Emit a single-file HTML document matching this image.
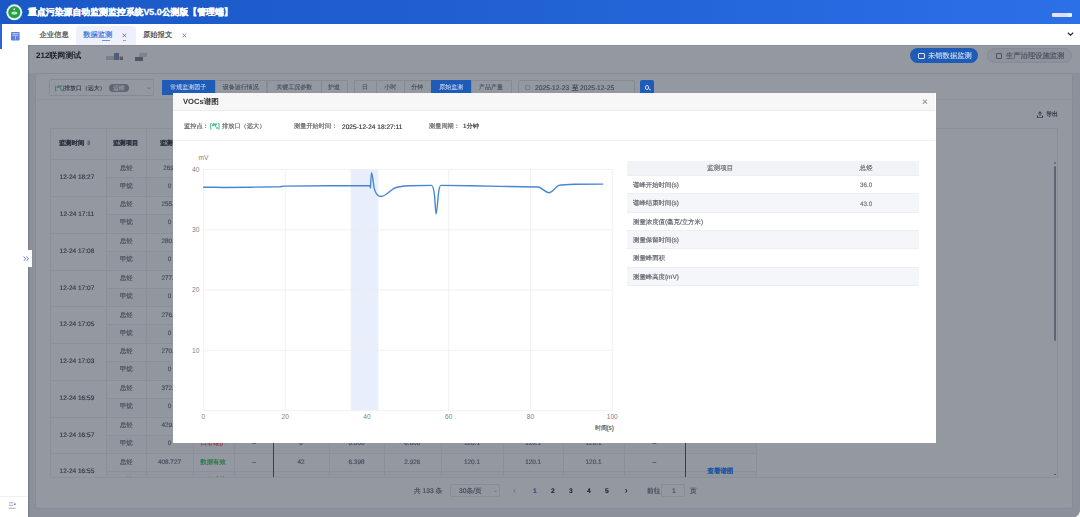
<!DOCTYPE html>
<html><head><meta charset="utf-8">
<style>
*{box-sizing:border-box;margin:0;padding:0}
html,body{width:1080px;height:517px;overflow:hidden;background:#fff}
body{position:relative;font-family:"Liberation Sans",sans-serif;color:#606266}
.abs{position:absolute}
.t{position:absolute;white-space:nowrap;line-height:1;text-rendering:geometricPrecision;-webkit-text-stroke:0.35px currentColor}
#hdr{left:0;top:0;width:1080px;height:23.5px;background:linear-gradient(90deg,#1a58c6 0%,#1f5fd0 40%,#2668de 75%,#2c70e8 100%);}
#hdr .logo{left:6px;top:4.8px;width:16px;height:16px;border-radius:50%;background:#fff}
#hdr .logo i{position:absolute;left:2px;top:2px;width:12px;height:12px;border-radius:50%;background:#1f9a3c}
#hdr .logo b{position:absolute;left:4.5px;top:4.5px;width:7px;height:7px;border-radius:50%;background:#fff}
#hdr .logo s{position:absolute;left:5.5px;top:5.5px;width:5px;height:5px;border-radius:50%;background:#2aa84a}
#hdr .title{text-rendering:geometricPrecision;left:28px;top:6.2px;font-size:8.9px;font-weight:bold;color:#fff;white-space:nowrap;line-height:13px;-webkit-text-stroke:0.3px #fff}
#side{left:0;top:23.5px;width:28px;height:494px;background:#fff}
#tabs{left:28px;top:23.5px;width:1052px;height:21px;background:#fff}
.tab{position:absolute;top:0;text-rendering:geometricPrecision;height:21px;line-height:22.2px;font-size:7.3px;color:#303133;white-space:nowrap;-webkit-text-stroke:0.2px currentColor}
#page{left:28px;top:44.5px;width:1052px;height:472.5px;background:#f0f2f5;overflow:hidden}
#over{left:28px;top:44.5px;width:1052px;height:472.5px;overflow:hidden}
#mask{left:28px;top:44.5px;width:1052px;height:472.5px;background:rgba(0,10,30,0.42)}
#modal{left:173px;top:93.2px;width:762.8px;height:349.5px;background:#fff;overflow:hidden}
</style></head><body>
<div id="root" style="position:absolute;left:0;top:0;width:1080px;height:517px;overflow:hidden">
<div id="hdr" class="abs">
  <svg class="abs" style="left:6px;top:4px" width="17" height="17" viewBox="0 0 17 17"><circle cx="8.3" cy="8.3" r="8" fill="#d9eedc"/><circle cx="8.3" cy="8.3" r="6.9" fill="none" stroke="#ffffff" stroke-width="0.9" stroke-dasharray="1 0.6"/><circle cx="8.3" cy="8.3" r="6" fill="#22a046"/><ellipse cx="8.3" cy="9" rx="3" ry="1.6" fill="#bfe6c6"/><circle cx="8.3" cy="5.2" r="0.9" fill="#e8f6ea"/></svg>
  <div class="title abs">重点污染源自动监测监控系统V5.0公测版【管理端】</div>
  <div class="abs" style="left:1052px;top:12.5px;width:20px;height:4.5px;background:linear-gradient(90deg,#dfe6f8,#f2d9e6,#cfe2f8,#e9f6ff);border-radius:1px"></div>
</div>
<div id="side" class="abs">
  <div class="abs" style="left:0;top:0;width:1.5px;height:25px;background:#2a64d6"></div>
  <svg class="abs" style="left:10.5px;top:8.8px" width="9" height="9" viewBox="0 0 9 9"><rect x="0" y="0" width="8.6" height="8.6" rx="1" fill="#5a80e0"/><rect x="1.3" y="1.4" width="6" height="0.9" fill="#dfe8fb"/><rect x="1.3" y="3.4" width="6" height="0.7" fill="#c9d6f6"/><rect x="4" y="4.1" width="0.7" height="3.4" fill="#c9d6f6"/></svg>
  <div class="abs" style="left:0;top:472px;width:28px;height:1px;background:#eef0f3"></div>
  <svg class="abs" style="left:7.5px;top:477.5px" width="9" height="9" viewBox="0 0 9 9"><path d="M1,1.8 H5.3 M1,4.3 H5.3 M0.6,7.2 H7.6" stroke="#9aa2b2" stroke-width="0.9"/><circle cx="6.8" cy="3.3" r="1" fill="#7f89a8"/></svg>
</div>
<div id="tabs" class="abs">
  <div class="tab" style="left:11.5px;color:#45484f">企业信息</div>
  <div class="abs" style="left:47.5px;top:2.5px;width:60px;height:18.5px;background:#eef1fb;border-radius:3px 3px 0 0"></div>
  <div class="tab" style="left:55.2px;color:#3a6fd8">数据监测</div>
  <svg class="abs" style="left:93.5px;top:9.5px" width="5" height="5" viewBox="0 0 5 5"><path d="M0.6,0.6 L4.2,4.2 M4.2,0.6 L0.6,4.2" stroke="#5a5f70" stroke-width="0.8"/></svg>
  <div class="abs" style="left:74px;top:16.3px;width:7.5px;height:0.9px;background:#6f8fd8"></div>
  <div class="abs" style="left:94.5px;top:16.5px;width:3.5px;height:0.8px;background:#8fa5d8"></div>
  <div class="tab" style="left:115px;color:#45484f">原始报文</div>
  <svg class="abs" style="left:153.5px;top:9.5px" width="5" height="5" viewBox="0 0 5 5"><path d="M0.6,0.6 L4.2,4.2 M4.2,0.6 L0.6,4.2" stroke="#707480" stroke-width="0.8"/></svg>
  <svg class="abs" style="left:1038.5px;top:8.5px" width="7" height="4" viewBox="0 0 7 4"><path d="M0.8,0.8 L3.5,3.2 L6.2,0.8" fill="none" stroke="#303133" stroke-width="1.3"/></svg>
</div>
<div id="page" class="abs">
<div class="abs" style="left:0.00px;top:0.00px;width:1052.00px;height:28.00px;background:#fff"></div>
<div class="abs" style="left:7.00px;top:28.00px;width:1038.00px;height:436.00px;background:#fff;border:0.8px solid #e6e8ee;border-radius:3px"></div>
<div class="t" style="left:7.50px;top:7.90px;font-size:16.00px;font-weight:bold;color:#303133;-webkit-text-stroke:0;transform:scale(0.5);transform-origin:0 0">212<span style="font-weight:bold">联网测试</span></div>
<div class="abs" style="left:62.20px;top:12.20px;width:3.80px;height:3.80px;background:#fff;filter:blur(0.5px)"></div>
<div class="abs" style="left:70.00px;top:8.30px;width:3.80px;height:7.70px;background:#fff;filter:blur(0.5px)"></div>
<div class="abs" style="left:78.40px;top:11.70px;width:16.20px;height:4.30px;background:#d8d4dc;filter:blur(0.7px)"></div>
<div class="abs" style="left:86.20px;top:8.30px;width:4.50px;height:7.70px;background:#8a9ab8;filter:blur(0.7px)"></div>
<div class="abs" style="left:91.50px;top:12.20px;width:3.10px;height:3.80px;background:#a88890;filter:blur(0.6px)"></div>
<div class="abs" style="left:110.80px;top:8.60px;width:7.80px;height:3.60px;background:#d8dce4;filter:blur(0.6px)"></div>
<div class="abs" style="left:106.90px;top:12.80px;width:7.80px;height:3.60px;background:#8a8e96;filter:blur(0.6px)"></div>
<div class="abs" style="left:958.50px;top:3.80px;width:85.20px;height:14.80px;background:#f4f5f7;border:1px solid #e4e7ed;border-radius:8px"></div>
<div class="abs" style="left:967.50px;top:8.00px;width:6.00px;height:6.00px;border:0.9px solid #84878d;border-radius:1px"></div>
<div class="t" style="left:978.00px;top:7.00px;font-size:14.60px;color:#84878d;transform:scale(0.5);transform-origin:0 0">生产治理设施监测</div>
<div class="abs" style="left:7.00px;top:54.50px;width:1038.50px;height:0.80px;background:#f2f3f6"></div>
<div class="abs" style="left:21.40px;top:34.90px;width:105.00px;height:16.20px;border:0.8px solid #e4e7ed;border-radius:2px;background:#fff"></div>
<div class="t" style="left:26.90px;top:40.00px;font-size:11.80px;color:#6a6d73;transform:scale(0.5);transform-origin:0 0"><span style="color:#4cb893">[气]</span>排放口（远大）</div>
<div class="abs" style="left:81.40px;top:39.40px;width:19.50px;height:7.80px;background:#a3a7af;border-radius:4px"></div>
<div class="t" style="left:84.50px;top:40.50px;font-size:11.60px;color:#ffffff;transform:scale(0.5);transform-origin:0 0">运维</div>
<div class="abs" style="left:124.80px;top:36.00px;width:0.80px;height:14.00px;background:#eceef2"></div>
<div class="t" style="left:118.00px;top:38.50px;font-size:14.00px;color:#c0c4cc;transform:scale(0.5);transform-origin:0 0">⌄</div>
<div class="abs" style="left:187.00px;top:35.30px;width:52.30px;height:15.70px;background:#fff;border:0.8px solid #e6e8ed"></div>
<div class="t" style="left:187.00px;top:39.50px;width:103.00px;text-align:center;font-size:12.00px;color:#7c7f85;-webkit-text-stroke:0.25px currentColor;transform:scale(0.5);transform-origin:0 0">设备运行情况</div>
<div class="abs" style="left:238.50px;top:35.30px;width:55.30px;height:15.70px;background:#fff;border:0.8px solid #e6e8ed"></div>
<div class="t" style="left:238.50px;top:39.50px;width:109.00px;text-align:center;font-size:12.00px;color:#7c7f85;-webkit-text-stroke:0.25px currentColor;transform:scale(0.5);transform-origin:0 0">关键工况参数</div>
<div class="abs" style="left:293.00px;top:35.30px;width:26.80px;height:15.70px;background:#fff;border:0.8px solid #e6e8ed"></div>
<div class="t" style="left:293.00px;top:39.50px;width:52.00px;text-align:center;font-size:12.00px;color:#7c7f85;-webkit-text-stroke:0.25px currentColor;transform:scale(0.5);transform-origin:0 0">护道</div>
<div class="abs" style="left:325.50px;top:35.30px;width:23.00px;height:15.70px;background:#fff;border:0.8px solid #e6e8ed"></div>
<div class="t" style="left:325.50px;top:39.50px;width:44.40px;text-align:center;font-size:12.00px;color:#7c7f85;-webkit-text-stroke:0.25px currentColor;transform:scale(0.5);transform-origin:0 0">日</div>
<div class="abs" style="left:347.70px;top:35.30px;width:29.50px;height:15.70px;background:#fff;border:0.8px solid #e6e8ed"></div>
<div class="t" style="left:347.70px;top:39.50px;width:57.40px;text-align:center;font-size:12.00px;color:#7c7f85;-webkit-text-stroke:0.25px currentColor;transform:scale(0.5);transform-origin:0 0">小时</div>
<div class="abs" style="left:376.40px;top:35.30px;width:27.40px;height:15.70px;background:#fff;border:0.8px solid #e6e8ed"></div>
<div class="t" style="left:376.40px;top:39.50px;width:53.20px;text-align:center;font-size:12.00px;color:#7c7f85;-webkit-text-stroke:0.25px currentColor;transform:scale(0.5);transform-origin:0 0">分钟</div>
<div class="abs" style="left:443.30px;top:35.30px;width:41.00px;height:15.70px;background:#fff;border:0.8px solid #e6e8ed"></div>
<div class="t" style="left:443.30px;top:39.50px;width:80.40px;text-align:center;font-size:12.00px;color:#7c7f85;-webkit-text-stroke:0.25px currentColor;transform:scale(0.5);transform-origin:0 0">产品产量</div>
<div class="abs" style="left:490.00px;top:35.30px;width:116.60px;height:15.70px;border:0.8px solid #e6e8ed;border-radius:2px;background:#fff"></div>
<div class="abs" style="left:496.50px;top:40.00px;width:5.50px;height:5.50px;border:0.8px solid #d0d3d9;border-radius:1px"></div>
<div class="t" style="left:506.80px;top:39.80px;font-size:13.40px;color:#7a7d83;transform:scale(0.5);transform-origin:0 0">2025-12-23</div>
<div class="t" style="left:543.50px;top:39.80px;font-size:13.40px;color:#505358;transform:scale(0.5);transform-origin:0 0">至</div>
<div class="t" style="left:552.00px;top:39.80px;font-size:13.40px;color:#7a7d83;transform:scale(0.5);transform-origin:0 0">2025-12-25</div>
<svg class="abs" style="left:1009.20px;top:66.10px" width="6" height="7.5" viewBox="0 0 6 7.5"><path d="M0.5,4.5 L0.5,6.9 L5.5,6.9 L5.5,4.5 M3,5.2 L3,0.8 M1.3,2.4 L3,0.8 L4.7,2.4" fill="none" stroke="#45484f" stroke-width="0.9"/></svg>
<div class="t" style="left:1017.90px;top:66.80px;font-size:12.00px;color:#45484f;transform:scale(0.5);transform-origin:0 0">导出</div>
<div class="abs" style="left:22.00px;top:83.90px;width:1008.00px;height:349.90px;overflow:hidden"><div class="abs" style="left:0.00px;top:30.90px;width:706.00px;height:0.80px;background:#eff0f4"></div>
<div class="abs" style="left:55.80px;top:48.90px;width:650.20px;height:18.00px;background:#fbfbfc"></div>
<div class="abs" style="left:55.80px;top:85.65px;width:650.20px;height:18.00px;background:#fbfbfc"></div>
<div class="abs" style="left:55.80px;top:122.40px;width:650.20px;height:18.00px;background:#fbfbfc"></div>
<div class="abs" style="left:55.80px;top:159.15px;width:650.20px;height:18.00px;background:#fbfbfc"></div>
<div class="abs" style="left:55.80px;top:195.90px;width:650.20px;height:18.00px;background:#fbfbfc"></div>
<div class="abs" style="left:55.80px;top:232.65px;width:650.20px;height:18.00px;background:#fbfbfc"></div>
<div class="abs" style="left:55.80px;top:269.40px;width:650.20px;height:18.00px;background:#fbfbfc"></div>
<div class="abs" style="left:55.80px;top:306.15px;width:650.20px;height:18.00px;background:#fbfbfc"></div>
<div class="abs" style="left:55.80px;top:342.90px;width:650.20px;height:18.00px;background:#fbfbfc"></div>
<div class="abs" style="left:55.80px;top:0.00px;width:0.80px;height:349.90px;background:#eff0f4"></div>
<div class="abs" style="left:96.40px;top:0.00px;width:0.80px;height:349.90px;background:#eff0f4"></div>
<div class="abs" style="left:143.30px;top:0.00px;width:0.80px;height:349.90px;background:#eff0f4"></div>
<div class="abs" style="left:183.50px;top:0.00px;width:0.80px;height:349.90px;background:#eff0f4"></div>
<div class="abs" style="left:223.30px;top:0.00px;width:0.80px;height:349.90px;background:#eff0f4"></div>
<div class="abs" style="left:279.40px;top:0.00px;width:0.80px;height:349.90px;background:#eff0f4"></div>
<div class="abs" style="left:334.40px;top:0.00px;width:0.80px;height:349.90px;background:#eff0f4"></div>
<div class="abs" style="left:391.00px;top:0.00px;width:0.80px;height:349.90px;background:#eff0f4"></div>
<div class="abs" style="left:453.00px;top:0.00px;width:0.80px;height:349.90px;background:#eff0f4"></div>
<div class="abs" style="left:513.30px;top:0.00px;width:0.80px;height:349.90px;background:#eff0f4"></div>
<div class="abs" style="left:574.40px;top:0.00px;width:0.80px;height:349.90px;background:#eff0f4"></div>
<div class="abs" style="left:635.00px;top:0.00px;width:0.80px;height:349.90px;background:#eff0f4"></div>
<div class="abs" style="left:706.00px;top:0.00px;width:0.80px;height:349.90px;background:#eff0f4"></div>
<div class="t" style="left:8.50px;top:11.40px;font-size:12.70px;color:#4a4d54;font-weight:bold;-webkit-text-stroke:0.15px currentColor;transform:scale(0.5);transform-origin:0 0">监测时间 <span style="font-size:12.00px;color:#a8abb2">⇕</span></div>
<div class="t" style="left:63.00px;top:11.40px;font-size:12.70px;color:#4a4d54;font-weight:bold;-webkit-text-stroke:0.15px currentColor;transform:scale(0.5);transform-origin:0 0">监测项目</div>
<div class="t" style="left:109.50px;top:11.40px;font-size:12.70px;color:#4a4d54;font-weight:bold;-webkit-text-stroke:0.15px currentColor;transform:scale(0.5);transform-origin:0 0">监测值(mg/m³)</div>
<div class="abs" style="left:0.00px;top:67.65px;width:706.00px;height:0.80px;background:#eff0f4"></div>
<div class="abs" style="left:55.80px;top:48.90px;width:650.20px;height:0.80px;background:#eff0f4"></div>
<div class="t" style="left:-1.20px;top:45.00px;width:111.60px;text-align:center;font-size:13.00px;color:#5a5c62;transform:scale(0.5);transform-origin:0 0">12-24 18:27</div>
<div class="t" style="left:55.80px;top:36.30px;width:81.20px;text-align:center;font-size:12.80px;color:#7d8087;transform:scale(0.5);transform-origin:0 0">总烃</div>
<div class="t" style="left:96.40px;top:36.30px;width:93.80px;text-align:center;font-size:12.80px;color:#7d8087;transform:scale(0.5);transform-origin:0 0">269.</div>
<div class="t" style="left:143.30px;top:36.30px;width:80.40px;text-align:center;font-size:12.80px;color:#7d8087;transform:scale(0.5);transform-origin:0 0"><span style="color:#45c060">数据有效</span></div>
<div class="t" style="left:183.50px;top:36.30px;width:79.60px;text-align:center;font-size:12.80px;color:#7d8087;transform:scale(0.5);transform-origin:0 0">--</div>
<div class="t" style="left:223.30px;top:36.30px;width:112.20px;text-align:center;font-size:12.80px;color:#7d8087;transform:scale(0.5);transform-origin:0 0">42</div>
<div class="t" style="left:279.40px;top:36.30px;width:110.00px;text-align:center;font-size:12.80px;color:#7d8087;transform:scale(0.5);transform-origin:0 0">6.398</div>
<div class="t" style="left:334.40px;top:36.30px;width:113.20px;text-align:center;font-size:12.80px;color:#7d8087;transform:scale(0.5);transform-origin:0 0">2.926</div>
<div class="t" style="left:391.00px;top:36.30px;width:124.00px;text-align:center;font-size:12.80px;color:#7d8087;transform:scale(0.5);transform-origin:0 0">120.1</div>
<div class="t" style="left:453.00px;top:36.30px;width:120.60px;text-align:center;font-size:12.80px;color:#7d8087;transform:scale(0.5);transform-origin:0 0">120.1</div>
<div class="t" style="left:513.30px;top:36.30px;width:122.20px;text-align:center;font-size:12.80px;color:#7d8087;transform:scale(0.5);transform-origin:0 0">120.1</div>
<div class="t" style="left:574.40px;top:36.30px;width:121.20px;text-align:center;font-size:12.80px;color:#7d8087;transform:scale(0.5);transform-origin:0 0">--</div>
<div class="t" style="left:55.80px;top:54.30px;width:81.20px;text-align:center;font-size:12.80px;color:#7d8087;transform:scale(0.5);transform-origin:0 0">甲烷</div>
<div class="t" style="left:96.40px;top:54.30px;width:93.80px;text-align:center;font-size:12.80px;color:#7d8087;transform:scale(0.5);transform-origin:0 0">0</div>
<div class="t" style="left:143.30px;top:54.30px;width:80.40px;text-align:center;font-size:12.80px;color:#7d8087;transform:scale(0.5);transform-origin:0 0"><span style="color:#ff5050">日常维护</span></div>
<div class="t" style="left:183.50px;top:54.30px;width:79.60px;text-align:center;font-size:12.80px;color:#7d8087;transform:scale(0.5);transform-origin:0 0">--</div>
<div class="t" style="left:223.30px;top:54.30px;width:112.20px;text-align:center;font-size:12.80px;color:#7d8087;transform:scale(0.5);transform-origin:0 0">0</div>
<div class="t" style="left:279.40px;top:54.30px;width:110.00px;text-align:center;font-size:12.80px;color:#7d8087;transform:scale(0.5);transform-origin:0 0">0.000</div>
<div class="t" style="left:334.40px;top:54.30px;width:113.20px;text-align:center;font-size:12.80px;color:#7d8087;transform:scale(0.5);transform-origin:0 0">0.000</div>
<div class="t" style="left:391.00px;top:54.30px;width:124.00px;text-align:center;font-size:12.80px;color:#7d8087;transform:scale(0.5);transform-origin:0 0">120.1</div>
<div class="t" style="left:453.00px;top:54.30px;width:120.60px;text-align:center;font-size:12.80px;color:#7d8087;transform:scale(0.5);transform-origin:0 0">120.1</div>
<div class="t" style="left:513.30px;top:54.30px;width:122.20px;text-align:center;font-size:12.80px;color:#7d8087;transform:scale(0.5);transform-origin:0 0">120.1</div>
<div class="t" style="left:574.40px;top:54.30px;width:121.20px;text-align:center;font-size:12.80px;color:#7d8087;transform:scale(0.5);transform-origin:0 0">--</div>
<div class="t" style="left:635.00px;top:44.30px;width:142.00px;text-align:center;font-size:13.00px;color:#3a8cff;font-weight:bold;-webkit-text-stroke:0.1px currentColor;transform:scale(0.5);transform-origin:0 0">查看谱图</div>
<div class="abs" style="left:0.00px;top:104.40px;width:706.00px;height:0.80px;background:#eff0f4"></div>
<div class="abs" style="left:55.80px;top:85.65px;width:650.20px;height:0.80px;background:#eff0f4"></div>
<div class="t" style="left:-1.20px;top:81.75px;width:111.60px;text-align:center;font-size:13.00px;color:#5a5c62;transform:scale(0.5);transform-origin:0 0">12-24 17:11</div>
<div class="t" style="left:55.80px;top:73.05px;width:81.20px;text-align:center;font-size:12.80px;color:#7d8087;transform:scale(0.5);transform-origin:0 0">总烃</div>
<div class="t" style="left:96.40px;top:73.05px;width:93.80px;text-align:center;font-size:12.80px;color:#7d8087;transform:scale(0.5);transform-origin:0 0">255.5</div>
<div class="t" style="left:143.30px;top:73.05px;width:80.40px;text-align:center;font-size:12.80px;color:#7d8087;transform:scale(0.5);transform-origin:0 0"><span style="color:#45c060">数据有效</span></div>
<div class="t" style="left:183.50px;top:73.05px;width:79.60px;text-align:center;font-size:12.80px;color:#7d8087;transform:scale(0.5);transform-origin:0 0">--</div>
<div class="t" style="left:223.30px;top:73.05px;width:112.20px;text-align:center;font-size:12.80px;color:#7d8087;transform:scale(0.5);transform-origin:0 0">42</div>
<div class="t" style="left:279.40px;top:73.05px;width:110.00px;text-align:center;font-size:12.80px;color:#7d8087;transform:scale(0.5);transform-origin:0 0">6.398</div>
<div class="t" style="left:334.40px;top:73.05px;width:113.20px;text-align:center;font-size:12.80px;color:#7d8087;transform:scale(0.5);transform-origin:0 0">2.926</div>
<div class="t" style="left:391.00px;top:73.05px;width:124.00px;text-align:center;font-size:12.80px;color:#7d8087;transform:scale(0.5);transform-origin:0 0">120.1</div>
<div class="t" style="left:453.00px;top:73.05px;width:120.60px;text-align:center;font-size:12.80px;color:#7d8087;transform:scale(0.5);transform-origin:0 0">120.1</div>
<div class="t" style="left:513.30px;top:73.05px;width:122.20px;text-align:center;font-size:12.80px;color:#7d8087;transform:scale(0.5);transform-origin:0 0">120.1</div>
<div class="t" style="left:574.40px;top:73.05px;width:121.20px;text-align:center;font-size:12.80px;color:#7d8087;transform:scale(0.5);transform-origin:0 0">--</div>
<div class="t" style="left:55.80px;top:91.05px;width:81.20px;text-align:center;font-size:12.80px;color:#7d8087;transform:scale(0.5);transform-origin:0 0">甲烷</div>
<div class="t" style="left:96.40px;top:91.05px;width:93.80px;text-align:center;font-size:12.80px;color:#7d8087;transform:scale(0.5);transform-origin:0 0">0</div>
<div class="t" style="left:143.30px;top:91.05px;width:80.40px;text-align:center;font-size:12.80px;color:#7d8087;transform:scale(0.5);transform-origin:0 0"><span style="color:#ff5050">日常维护</span></div>
<div class="t" style="left:183.50px;top:91.05px;width:79.60px;text-align:center;font-size:12.80px;color:#7d8087;transform:scale(0.5);transform-origin:0 0">--</div>
<div class="t" style="left:223.30px;top:91.05px;width:112.20px;text-align:center;font-size:12.80px;color:#7d8087;transform:scale(0.5);transform-origin:0 0">0</div>
<div class="t" style="left:279.40px;top:91.05px;width:110.00px;text-align:center;font-size:12.80px;color:#7d8087;transform:scale(0.5);transform-origin:0 0">0.000</div>
<div class="t" style="left:334.40px;top:91.05px;width:113.20px;text-align:center;font-size:12.80px;color:#7d8087;transform:scale(0.5);transform-origin:0 0">0.000</div>
<div class="t" style="left:391.00px;top:91.05px;width:124.00px;text-align:center;font-size:12.80px;color:#7d8087;transform:scale(0.5);transform-origin:0 0">120.1</div>
<div class="t" style="left:453.00px;top:91.05px;width:120.60px;text-align:center;font-size:12.80px;color:#7d8087;transform:scale(0.5);transform-origin:0 0">120.1</div>
<div class="t" style="left:513.30px;top:91.05px;width:122.20px;text-align:center;font-size:12.80px;color:#7d8087;transform:scale(0.5);transform-origin:0 0">120.1</div>
<div class="t" style="left:574.40px;top:91.05px;width:121.20px;text-align:center;font-size:12.80px;color:#7d8087;transform:scale(0.5);transform-origin:0 0">--</div>
<div class="t" style="left:635.00px;top:81.05px;width:142.00px;text-align:center;font-size:13.00px;color:#3a8cff;font-weight:bold;-webkit-text-stroke:0.1px currentColor;transform:scale(0.5);transform-origin:0 0">查看谱图</div>
<div class="abs" style="left:0.00px;top:141.15px;width:706.00px;height:0.80px;background:#eff0f4"></div>
<div class="abs" style="left:55.80px;top:122.40px;width:650.20px;height:0.80px;background:#eff0f4"></div>
<div class="t" style="left:-1.20px;top:118.50px;width:111.60px;text-align:center;font-size:13.00px;color:#5a5c62;transform:scale(0.5);transform-origin:0 0">12-24 17:08</div>
<div class="t" style="left:55.80px;top:109.80px;width:81.20px;text-align:center;font-size:12.80px;color:#7d8087;transform:scale(0.5);transform-origin:0 0">总烃</div>
<div class="t" style="left:96.40px;top:109.80px;width:93.80px;text-align:center;font-size:12.80px;color:#7d8087;transform:scale(0.5);transform-origin:0 0">280.5</div>
<div class="t" style="left:143.30px;top:109.80px;width:80.40px;text-align:center;font-size:12.80px;color:#7d8087;transform:scale(0.5);transform-origin:0 0"><span style="color:#45c060">数据有效</span></div>
<div class="t" style="left:183.50px;top:109.80px;width:79.60px;text-align:center;font-size:12.80px;color:#7d8087;transform:scale(0.5);transform-origin:0 0">--</div>
<div class="t" style="left:223.30px;top:109.80px;width:112.20px;text-align:center;font-size:12.80px;color:#7d8087;transform:scale(0.5);transform-origin:0 0">42</div>
<div class="t" style="left:279.40px;top:109.80px;width:110.00px;text-align:center;font-size:12.80px;color:#7d8087;transform:scale(0.5);transform-origin:0 0">6.398</div>
<div class="t" style="left:334.40px;top:109.80px;width:113.20px;text-align:center;font-size:12.80px;color:#7d8087;transform:scale(0.5);transform-origin:0 0">2.926</div>
<div class="t" style="left:391.00px;top:109.80px;width:124.00px;text-align:center;font-size:12.80px;color:#7d8087;transform:scale(0.5);transform-origin:0 0">120.1</div>
<div class="t" style="left:453.00px;top:109.80px;width:120.60px;text-align:center;font-size:12.80px;color:#7d8087;transform:scale(0.5);transform-origin:0 0">120.1</div>
<div class="t" style="left:513.30px;top:109.80px;width:122.20px;text-align:center;font-size:12.80px;color:#7d8087;transform:scale(0.5);transform-origin:0 0">120.1</div>
<div class="t" style="left:574.40px;top:109.80px;width:121.20px;text-align:center;font-size:12.80px;color:#7d8087;transform:scale(0.5);transform-origin:0 0">--</div>
<div class="t" style="left:55.80px;top:127.80px;width:81.20px;text-align:center;font-size:12.80px;color:#7d8087;transform:scale(0.5);transform-origin:0 0">甲烷</div>
<div class="t" style="left:96.40px;top:127.80px;width:93.80px;text-align:center;font-size:12.80px;color:#7d8087;transform:scale(0.5);transform-origin:0 0">0</div>
<div class="t" style="left:143.30px;top:127.80px;width:80.40px;text-align:center;font-size:12.80px;color:#7d8087;transform:scale(0.5);transform-origin:0 0"><span style="color:#ff5050">日常维护</span></div>
<div class="t" style="left:183.50px;top:127.80px;width:79.60px;text-align:center;font-size:12.80px;color:#7d8087;transform:scale(0.5);transform-origin:0 0">--</div>
<div class="t" style="left:223.30px;top:127.80px;width:112.20px;text-align:center;font-size:12.80px;color:#7d8087;transform:scale(0.5);transform-origin:0 0">0</div>
<div class="t" style="left:279.40px;top:127.80px;width:110.00px;text-align:center;font-size:12.80px;color:#7d8087;transform:scale(0.5);transform-origin:0 0">0.000</div>
<div class="t" style="left:334.40px;top:127.80px;width:113.20px;text-align:center;font-size:12.80px;color:#7d8087;transform:scale(0.5);transform-origin:0 0">0.000</div>
<div class="t" style="left:391.00px;top:127.80px;width:124.00px;text-align:center;font-size:12.80px;color:#7d8087;transform:scale(0.5);transform-origin:0 0">120.1</div>
<div class="t" style="left:453.00px;top:127.80px;width:120.60px;text-align:center;font-size:12.80px;color:#7d8087;transform:scale(0.5);transform-origin:0 0">120.1</div>
<div class="t" style="left:513.30px;top:127.80px;width:122.20px;text-align:center;font-size:12.80px;color:#7d8087;transform:scale(0.5);transform-origin:0 0">120.1</div>
<div class="t" style="left:574.40px;top:127.80px;width:121.20px;text-align:center;font-size:12.80px;color:#7d8087;transform:scale(0.5);transform-origin:0 0">--</div>
<div class="t" style="left:635.00px;top:117.80px;width:142.00px;text-align:center;font-size:13.00px;color:#3a8cff;font-weight:bold;-webkit-text-stroke:0.1px currentColor;transform:scale(0.5);transform-origin:0 0">查看谱图</div>
<div class="abs" style="left:0.00px;top:177.90px;width:706.00px;height:0.80px;background:#eff0f4"></div>
<div class="abs" style="left:55.80px;top:159.15px;width:650.20px;height:0.80px;background:#eff0f4"></div>
<div class="t" style="left:-1.20px;top:155.25px;width:111.60px;text-align:center;font-size:13.00px;color:#5a5c62;transform:scale(0.5);transform-origin:0 0">12-24 17:07</div>
<div class="t" style="left:55.80px;top:146.55px;width:81.20px;text-align:center;font-size:12.80px;color:#7d8087;transform:scale(0.5);transform-origin:0 0">总烃</div>
<div class="t" style="left:96.40px;top:146.55px;width:93.80px;text-align:center;font-size:12.80px;color:#7d8087;transform:scale(0.5);transform-origin:0 0">277.0</div>
<div class="t" style="left:143.30px;top:146.55px;width:80.40px;text-align:center;font-size:12.80px;color:#7d8087;transform:scale(0.5);transform-origin:0 0"><span style="color:#45c060">数据有效</span></div>
<div class="t" style="left:183.50px;top:146.55px;width:79.60px;text-align:center;font-size:12.80px;color:#7d8087;transform:scale(0.5);transform-origin:0 0">--</div>
<div class="t" style="left:223.30px;top:146.55px;width:112.20px;text-align:center;font-size:12.80px;color:#7d8087;transform:scale(0.5);transform-origin:0 0">42</div>
<div class="t" style="left:279.40px;top:146.55px;width:110.00px;text-align:center;font-size:12.80px;color:#7d8087;transform:scale(0.5);transform-origin:0 0">6.398</div>
<div class="t" style="left:334.40px;top:146.55px;width:113.20px;text-align:center;font-size:12.80px;color:#7d8087;transform:scale(0.5);transform-origin:0 0">2.926</div>
<div class="t" style="left:391.00px;top:146.55px;width:124.00px;text-align:center;font-size:12.80px;color:#7d8087;transform:scale(0.5);transform-origin:0 0">120.1</div>
<div class="t" style="left:453.00px;top:146.55px;width:120.60px;text-align:center;font-size:12.80px;color:#7d8087;transform:scale(0.5);transform-origin:0 0">120.1</div>
<div class="t" style="left:513.30px;top:146.55px;width:122.20px;text-align:center;font-size:12.80px;color:#7d8087;transform:scale(0.5);transform-origin:0 0">120.1</div>
<div class="t" style="left:574.40px;top:146.55px;width:121.20px;text-align:center;font-size:12.80px;color:#7d8087;transform:scale(0.5);transform-origin:0 0">--</div>
<div class="t" style="left:55.80px;top:164.55px;width:81.20px;text-align:center;font-size:12.80px;color:#7d8087;transform:scale(0.5);transform-origin:0 0">甲烷</div>
<div class="t" style="left:96.40px;top:164.55px;width:93.80px;text-align:center;font-size:12.80px;color:#7d8087;transform:scale(0.5);transform-origin:0 0">0</div>
<div class="t" style="left:143.30px;top:164.55px;width:80.40px;text-align:center;font-size:12.80px;color:#7d8087;transform:scale(0.5);transform-origin:0 0"><span style="color:#ff5050">日常维护</span></div>
<div class="t" style="left:183.50px;top:164.55px;width:79.60px;text-align:center;font-size:12.80px;color:#7d8087;transform:scale(0.5);transform-origin:0 0">--</div>
<div class="t" style="left:223.30px;top:164.55px;width:112.20px;text-align:center;font-size:12.80px;color:#7d8087;transform:scale(0.5);transform-origin:0 0">0</div>
<div class="t" style="left:279.40px;top:164.55px;width:110.00px;text-align:center;font-size:12.80px;color:#7d8087;transform:scale(0.5);transform-origin:0 0">0.000</div>
<div class="t" style="left:334.40px;top:164.55px;width:113.20px;text-align:center;font-size:12.80px;color:#7d8087;transform:scale(0.5);transform-origin:0 0">0.000</div>
<div class="t" style="left:391.00px;top:164.55px;width:124.00px;text-align:center;font-size:12.80px;color:#7d8087;transform:scale(0.5);transform-origin:0 0">120.1</div>
<div class="t" style="left:453.00px;top:164.55px;width:120.60px;text-align:center;font-size:12.80px;color:#7d8087;transform:scale(0.5);transform-origin:0 0">120.1</div>
<div class="t" style="left:513.30px;top:164.55px;width:122.20px;text-align:center;font-size:12.80px;color:#7d8087;transform:scale(0.5);transform-origin:0 0">120.1</div>
<div class="t" style="left:574.40px;top:164.55px;width:121.20px;text-align:center;font-size:12.80px;color:#7d8087;transform:scale(0.5);transform-origin:0 0">--</div>
<div class="t" style="left:635.00px;top:154.55px;width:142.00px;text-align:center;font-size:13.00px;color:#3a8cff;font-weight:bold;-webkit-text-stroke:0.1px currentColor;transform:scale(0.5);transform-origin:0 0">查看谱图</div>
<div class="abs" style="left:0.00px;top:214.65px;width:706.00px;height:0.80px;background:#eff0f4"></div>
<div class="abs" style="left:55.80px;top:195.90px;width:650.20px;height:0.80px;background:#eff0f4"></div>
<div class="t" style="left:-1.20px;top:192.00px;width:111.60px;text-align:center;font-size:13.00px;color:#5a5c62;transform:scale(0.5);transform-origin:0 0">12-24 17:05</div>
<div class="t" style="left:55.80px;top:183.30px;width:81.20px;text-align:center;font-size:12.80px;color:#7d8087;transform:scale(0.5);transform-origin:0 0">总烃</div>
<div class="t" style="left:96.40px;top:183.30px;width:93.80px;text-align:center;font-size:12.80px;color:#7d8087;transform:scale(0.5);transform-origin:0 0">276.0</div>
<div class="t" style="left:143.30px;top:183.30px;width:80.40px;text-align:center;font-size:12.80px;color:#7d8087;transform:scale(0.5);transform-origin:0 0"><span style="color:#45c060">数据有效</span></div>
<div class="t" style="left:183.50px;top:183.30px;width:79.60px;text-align:center;font-size:12.80px;color:#7d8087;transform:scale(0.5);transform-origin:0 0">--</div>
<div class="t" style="left:223.30px;top:183.30px;width:112.20px;text-align:center;font-size:12.80px;color:#7d8087;transform:scale(0.5);transform-origin:0 0">42</div>
<div class="t" style="left:279.40px;top:183.30px;width:110.00px;text-align:center;font-size:12.80px;color:#7d8087;transform:scale(0.5);transform-origin:0 0">6.398</div>
<div class="t" style="left:334.40px;top:183.30px;width:113.20px;text-align:center;font-size:12.80px;color:#7d8087;transform:scale(0.5);transform-origin:0 0">2.926</div>
<div class="t" style="left:391.00px;top:183.30px;width:124.00px;text-align:center;font-size:12.80px;color:#7d8087;transform:scale(0.5);transform-origin:0 0">120.1</div>
<div class="t" style="left:453.00px;top:183.30px;width:120.60px;text-align:center;font-size:12.80px;color:#7d8087;transform:scale(0.5);transform-origin:0 0">120.1</div>
<div class="t" style="left:513.30px;top:183.30px;width:122.20px;text-align:center;font-size:12.80px;color:#7d8087;transform:scale(0.5);transform-origin:0 0">120.1</div>
<div class="t" style="left:574.40px;top:183.30px;width:121.20px;text-align:center;font-size:12.80px;color:#7d8087;transform:scale(0.5);transform-origin:0 0">--</div>
<div class="t" style="left:55.80px;top:201.30px;width:81.20px;text-align:center;font-size:12.80px;color:#7d8087;transform:scale(0.5);transform-origin:0 0">甲烷</div>
<div class="t" style="left:96.40px;top:201.30px;width:93.80px;text-align:center;font-size:12.80px;color:#7d8087;transform:scale(0.5);transform-origin:0 0">0</div>
<div class="t" style="left:143.30px;top:201.30px;width:80.40px;text-align:center;font-size:12.80px;color:#7d8087;transform:scale(0.5);transform-origin:0 0"><span style="color:#ff5050">日常维护</span></div>
<div class="t" style="left:183.50px;top:201.30px;width:79.60px;text-align:center;font-size:12.80px;color:#7d8087;transform:scale(0.5);transform-origin:0 0">--</div>
<div class="t" style="left:223.30px;top:201.30px;width:112.20px;text-align:center;font-size:12.80px;color:#7d8087;transform:scale(0.5);transform-origin:0 0">0</div>
<div class="t" style="left:279.40px;top:201.30px;width:110.00px;text-align:center;font-size:12.80px;color:#7d8087;transform:scale(0.5);transform-origin:0 0">0.000</div>
<div class="t" style="left:334.40px;top:201.30px;width:113.20px;text-align:center;font-size:12.80px;color:#7d8087;transform:scale(0.5);transform-origin:0 0">0.000</div>
<div class="t" style="left:391.00px;top:201.30px;width:124.00px;text-align:center;font-size:12.80px;color:#7d8087;transform:scale(0.5);transform-origin:0 0">120.1</div>
<div class="t" style="left:453.00px;top:201.30px;width:120.60px;text-align:center;font-size:12.80px;color:#7d8087;transform:scale(0.5);transform-origin:0 0">120.1</div>
<div class="t" style="left:513.30px;top:201.30px;width:122.20px;text-align:center;font-size:12.80px;color:#7d8087;transform:scale(0.5);transform-origin:0 0">120.1</div>
<div class="t" style="left:574.40px;top:201.30px;width:121.20px;text-align:center;font-size:12.80px;color:#7d8087;transform:scale(0.5);transform-origin:0 0">--</div>
<div class="t" style="left:635.00px;top:191.30px;width:142.00px;text-align:center;font-size:13.00px;color:#3a8cff;font-weight:bold;-webkit-text-stroke:0.1px currentColor;transform:scale(0.5);transform-origin:0 0">查看谱图</div>
<div class="abs" style="left:0.00px;top:251.40px;width:706.00px;height:0.80px;background:#eff0f4"></div>
<div class="abs" style="left:55.80px;top:232.65px;width:650.20px;height:0.80px;background:#eff0f4"></div>
<div class="t" style="left:-1.20px;top:228.75px;width:111.60px;text-align:center;font-size:13.00px;color:#5a5c62;transform:scale(0.5);transform-origin:0 0">12-24 17:03</div>
<div class="t" style="left:55.80px;top:220.05px;width:81.20px;text-align:center;font-size:12.80px;color:#7d8087;transform:scale(0.5);transform-origin:0 0">总烃</div>
<div class="t" style="left:96.40px;top:220.05px;width:93.80px;text-align:center;font-size:12.80px;color:#7d8087;transform:scale(0.5);transform-origin:0 0">270.0</div>
<div class="t" style="left:143.30px;top:220.05px;width:80.40px;text-align:center;font-size:12.80px;color:#7d8087;transform:scale(0.5);transform-origin:0 0"><span style="color:#45c060">数据有效</span></div>
<div class="t" style="left:183.50px;top:220.05px;width:79.60px;text-align:center;font-size:12.80px;color:#7d8087;transform:scale(0.5);transform-origin:0 0">--</div>
<div class="t" style="left:223.30px;top:220.05px;width:112.20px;text-align:center;font-size:12.80px;color:#7d8087;transform:scale(0.5);transform-origin:0 0">42</div>
<div class="t" style="left:279.40px;top:220.05px;width:110.00px;text-align:center;font-size:12.80px;color:#7d8087;transform:scale(0.5);transform-origin:0 0">6.398</div>
<div class="t" style="left:334.40px;top:220.05px;width:113.20px;text-align:center;font-size:12.80px;color:#7d8087;transform:scale(0.5);transform-origin:0 0">2.926</div>
<div class="t" style="left:391.00px;top:220.05px;width:124.00px;text-align:center;font-size:12.80px;color:#7d8087;transform:scale(0.5);transform-origin:0 0">120.1</div>
<div class="t" style="left:453.00px;top:220.05px;width:120.60px;text-align:center;font-size:12.80px;color:#7d8087;transform:scale(0.5);transform-origin:0 0">120.1</div>
<div class="t" style="left:513.30px;top:220.05px;width:122.20px;text-align:center;font-size:12.80px;color:#7d8087;transform:scale(0.5);transform-origin:0 0">120.1</div>
<div class="t" style="left:574.40px;top:220.05px;width:121.20px;text-align:center;font-size:12.80px;color:#7d8087;transform:scale(0.5);transform-origin:0 0">--</div>
<div class="t" style="left:55.80px;top:238.05px;width:81.20px;text-align:center;font-size:12.80px;color:#7d8087;transform:scale(0.5);transform-origin:0 0">甲烷</div>
<div class="t" style="left:96.40px;top:238.05px;width:93.80px;text-align:center;font-size:12.80px;color:#7d8087;transform:scale(0.5);transform-origin:0 0">0</div>
<div class="t" style="left:143.30px;top:238.05px;width:80.40px;text-align:center;font-size:12.80px;color:#7d8087;transform:scale(0.5);transform-origin:0 0"><span style="color:#ff5050">日常维护</span></div>
<div class="t" style="left:183.50px;top:238.05px;width:79.60px;text-align:center;font-size:12.80px;color:#7d8087;transform:scale(0.5);transform-origin:0 0">--</div>
<div class="t" style="left:223.30px;top:238.05px;width:112.20px;text-align:center;font-size:12.80px;color:#7d8087;transform:scale(0.5);transform-origin:0 0">0</div>
<div class="t" style="left:279.40px;top:238.05px;width:110.00px;text-align:center;font-size:12.80px;color:#7d8087;transform:scale(0.5);transform-origin:0 0">0.000</div>
<div class="t" style="left:334.40px;top:238.05px;width:113.20px;text-align:center;font-size:12.80px;color:#7d8087;transform:scale(0.5);transform-origin:0 0">0.000</div>
<div class="t" style="left:391.00px;top:238.05px;width:124.00px;text-align:center;font-size:12.80px;color:#7d8087;transform:scale(0.5);transform-origin:0 0">120.1</div>
<div class="t" style="left:453.00px;top:238.05px;width:120.60px;text-align:center;font-size:12.80px;color:#7d8087;transform:scale(0.5);transform-origin:0 0">120.1</div>
<div class="t" style="left:513.30px;top:238.05px;width:122.20px;text-align:center;font-size:12.80px;color:#7d8087;transform:scale(0.5);transform-origin:0 0">120.1</div>
<div class="t" style="left:574.40px;top:238.05px;width:121.20px;text-align:center;font-size:12.80px;color:#7d8087;transform:scale(0.5);transform-origin:0 0">--</div>
<div class="t" style="left:635.00px;top:228.05px;width:142.00px;text-align:center;font-size:13.00px;color:#3a8cff;font-weight:bold;-webkit-text-stroke:0.1px currentColor;transform:scale(0.5);transform-origin:0 0">查看谱图</div>
<div class="abs" style="left:0.00px;top:288.15px;width:706.00px;height:0.80px;background:#eff0f4"></div>
<div class="abs" style="left:55.80px;top:269.40px;width:650.20px;height:0.80px;background:#eff0f4"></div>
<div class="t" style="left:-1.20px;top:265.50px;width:111.60px;text-align:center;font-size:13.00px;color:#5a5c62;transform:scale(0.5);transform-origin:0 0">12-24 16:59</div>
<div class="t" style="left:55.80px;top:256.80px;width:81.20px;text-align:center;font-size:12.80px;color:#7d8087;transform:scale(0.5);transform-origin:0 0">总烃</div>
<div class="t" style="left:96.40px;top:256.80px;width:93.80px;text-align:center;font-size:12.80px;color:#7d8087;transform:scale(0.5);transform-origin:0 0">372.7</div>
<div class="t" style="left:143.30px;top:256.80px;width:80.40px;text-align:center;font-size:12.80px;color:#7d8087;transform:scale(0.5);transform-origin:0 0"><span style="color:#45c060">数据有效</span></div>
<div class="t" style="left:183.50px;top:256.80px;width:79.60px;text-align:center;font-size:12.80px;color:#7d8087;transform:scale(0.5);transform-origin:0 0">--</div>
<div class="t" style="left:223.30px;top:256.80px;width:112.20px;text-align:center;font-size:12.80px;color:#7d8087;transform:scale(0.5);transform-origin:0 0">42</div>
<div class="t" style="left:279.40px;top:256.80px;width:110.00px;text-align:center;font-size:12.80px;color:#7d8087;transform:scale(0.5);transform-origin:0 0">6.398</div>
<div class="t" style="left:334.40px;top:256.80px;width:113.20px;text-align:center;font-size:12.80px;color:#7d8087;transform:scale(0.5);transform-origin:0 0">2.926</div>
<div class="t" style="left:391.00px;top:256.80px;width:124.00px;text-align:center;font-size:12.80px;color:#7d8087;transform:scale(0.5);transform-origin:0 0">120.1</div>
<div class="t" style="left:453.00px;top:256.80px;width:120.60px;text-align:center;font-size:12.80px;color:#7d8087;transform:scale(0.5);transform-origin:0 0">120.1</div>
<div class="t" style="left:513.30px;top:256.80px;width:122.20px;text-align:center;font-size:12.80px;color:#7d8087;transform:scale(0.5);transform-origin:0 0">120.1</div>
<div class="t" style="left:574.40px;top:256.80px;width:121.20px;text-align:center;font-size:12.80px;color:#7d8087;transform:scale(0.5);transform-origin:0 0">--</div>
<div class="t" style="left:55.80px;top:274.80px;width:81.20px;text-align:center;font-size:12.80px;color:#7d8087;transform:scale(0.5);transform-origin:0 0">甲烷</div>
<div class="t" style="left:96.40px;top:274.80px;width:93.80px;text-align:center;font-size:12.80px;color:#7d8087;transform:scale(0.5);transform-origin:0 0">0</div>
<div class="t" style="left:143.30px;top:274.80px;width:80.40px;text-align:center;font-size:12.80px;color:#7d8087;transform:scale(0.5);transform-origin:0 0"><span style="color:#ff5050">日常维护</span></div>
<div class="t" style="left:183.50px;top:274.80px;width:79.60px;text-align:center;font-size:12.80px;color:#7d8087;transform:scale(0.5);transform-origin:0 0">--</div>
<div class="t" style="left:223.30px;top:274.80px;width:112.20px;text-align:center;font-size:12.80px;color:#7d8087;transform:scale(0.5);transform-origin:0 0">0</div>
<div class="t" style="left:279.40px;top:274.80px;width:110.00px;text-align:center;font-size:12.80px;color:#7d8087;transform:scale(0.5);transform-origin:0 0">0.000</div>
<div class="t" style="left:334.40px;top:274.80px;width:113.20px;text-align:center;font-size:12.80px;color:#7d8087;transform:scale(0.5);transform-origin:0 0">0.000</div>
<div class="t" style="left:391.00px;top:274.80px;width:124.00px;text-align:center;font-size:12.80px;color:#7d8087;transform:scale(0.5);transform-origin:0 0">120.1</div>
<div class="t" style="left:453.00px;top:274.80px;width:120.60px;text-align:center;font-size:12.80px;color:#7d8087;transform:scale(0.5);transform-origin:0 0">120.1</div>
<div class="t" style="left:513.30px;top:274.80px;width:122.20px;text-align:center;font-size:12.80px;color:#7d8087;transform:scale(0.5);transform-origin:0 0">120.1</div>
<div class="t" style="left:574.40px;top:274.80px;width:121.20px;text-align:center;font-size:12.80px;color:#7d8087;transform:scale(0.5);transform-origin:0 0">--</div>
<div class="t" style="left:635.00px;top:264.80px;width:142.00px;text-align:center;font-size:13.00px;color:#3a8cff;font-weight:bold;-webkit-text-stroke:0.1px currentColor;transform:scale(0.5);transform-origin:0 0">查看谱图</div>
<div class="abs" style="left:0.00px;top:324.90px;width:706.00px;height:0.80px;background:#eff0f4"></div>
<div class="abs" style="left:55.80px;top:306.15px;width:650.20px;height:0.80px;background:#eff0f4"></div>
<div class="t" style="left:-1.20px;top:302.25px;width:111.60px;text-align:center;font-size:13.00px;color:#5a5c62;transform:scale(0.5);transform-origin:0 0">12-24 16:57</div>
<div class="t" style="left:55.80px;top:293.55px;width:81.20px;text-align:center;font-size:12.80px;color:#7d8087;transform:scale(0.5);transform-origin:0 0">总烃</div>
<div class="t" style="left:96.40px;top:293.55px;width:93.80px;text-align:center;font-size:12.80px;color:#7d8087;transform:scale(0.5);transform-origin:0 0">429.3</div>
<div class="t" style="left:143.30px;top:293.55px;width:80.40px;text-align:center;font-size:12.80px;color:#7d8087;transform:scale(0.5);transform-origin:0 0"><span style="color:#45c060">数据有效</span></div>
<div class="t" style="left:183.50px;top:293.55px;width:79.60px;text-align:center;font-size:12.80px;color:#7d8087;transform:scale(0.5);transform-origin:0 0">--</div>
<div class="t" style="left:223.30px;top:293.55px;width:112.20px;text-align:center;font-size:12.80px;color:#7d8087;transform:scale(0.5);transform-origin:0 0">42</div>
<div class="t" style="left:279.40px;top:293.55px;width:110.00px;text-align:center;font-size:12.80px;color:#7d8087;transform:scale(0.5);transform-origin:0 0">6.398</div>
<div class="t" style="left:334.40px;top:293.55px;width:113.20px;text-align:center;font-size:12.80px;color:#7d8087;transform:scale(0.5);transform-origin:0 0">2.926</div>
<div class="t" style="left:391.00px;top:293.55px;width:124.00px;text-align:center;font-size:12.80px;color:#7d8087;transform:scale(0.5);transform-origin:0 0">120.1</div>
<div class="t" style="left:453.00px;top:293.55px;width:120.60px;text-align:center;font-size:12.80px;color:#7d8087;transform:scale(0.5);transform-origin:0 0">120.1</div>
<div class="t" style="left:513.30px;top:293.55px;width:122.20px;text-align:center;font-size:12.80px;color:#7d8087;transform:scale(0.5);transform-origin:0 0">120.1</div>
<div class="t" style="left:574.40px;top:293.55px;width:121.20px;text-align:center;font-size:12.80px;color:#7d8087;transform:scale(0.5);transform-origin:0 0">--</div>
<div class="t" style="left:55.80px;top:311.55px;width:81.20px;text-align:center;font-size:12.80px;color:#7d8087;transform:scale(0.5);transform-origin:0 0">甲烷</div>
<div class="t" style="left:96.40px;top:311.55px;width:93.80px;text-align:center;font-size:12.80px;color:#7d8087;transform:scale(0.5);transform-origin:0 0">0</div>
<div class="t" style="left:143.30px;top:311.55px;width:80.40px;text-align:center;font-size:12.80px;color:#7d8087;transform:scale(0.5);transform-origin:0 0"><span style="color:#ff5050">日常维护</span></div>
<div class="t" style="left:183.50px;top:311.55px;width:79.60px;text-align:center;font-size:12.80px;color:#7d8087;transform:scale(0.5);transform-origin:0 0">--</div>
<div class="t" style="left:223.30px;top:311.55px;width:112.20px;text-align:center;font-size:12.80px;color:#7d8087;transform:scale(0.5);transform-origin:0 0">0</div>
<div class="t" style="left:279.40px;top:311.55px;width:110.00px;text-align:center;font-size:12.80px;color:#7d8087;transform:scale(0.5);transform-origin:0 0">0.000</div>
<div class="t" style="left:334.40px;top:311.55px;width:113.20px;text-align:center;font-size:12.80px;color:#7d8087;transform:scale(0.5);transform-origin:0 0">0.000</div>
<div class="t" style="left:391.00px;top:311.55px;width:124.00px;text-align:center;font-size:12.80px;color:#7d8087;transform:scale(0.5);transform-origin:0 0">120.1</div>
<div class="t" style="left:453.00px;top:311.55px;width:120.60px;text-align:center;font-size:12.80px;color:#7d8087;transform:scale(0.5);transform-origin:0 0">120.1</div>
<div class="t" style="left:513.30px;top:311.55px;width:122.20px;text-align:center;font-size:12.80px;color:#7d8087;transform:scale(0.5);transform-origin:0 0">120.1</div>
<div class="t" style="left:574.40px;top:311.55px;width:121.20px;text-align:center;font-size:12.80px;color:#7d8087;transform:scale(0.5);transform-origin:0 0">--</div>
<div class="t" style="left:635.00px;top:301.55px;width:142.00px;text-align:center;font-size:13.00px;color:#3a8cff;font-weight:bold;-webkit-text-stroke:0.1px currentColor;transform:scale(0.5);transform-origin:0 0">查看谱图</div>
<div class="abs" style="left:0.00px;top:361.65px;width:706.00px;height:0.80px;background:#eff0f4"></div>
<div class="abs" style="left:55.80px;top:342.90px;width:650.20px;height:0.80px;background:#eff0f4"></div>
<div class="t" style="left:-1.20px;top:339.00px;width:111.60px;text-align:center;font-size:13.00px;color:#5a5c62;transform:scale(0.5);transform-origin:0 0">12-24 16:55</div>
<div class="t" style="left:55.80px;top:330.30px;width:81.20px;text-align:center;font-size:12.80px;color:#7d8087;transform:scale(0.5);transform-origin:0 0">总烃</div>
<div class="t" style="left:96.40px;top:330.30px;width:93.80px;text-align:center;font-size:12.80px;color:#7d8087;transform:scale(0.5);transform-origin:0 0">408.727</div>
<div class="t" style="left:143.30px;top:330.30px;width:80.40px;text-align:center;font-size:12.80px;color:#7d8087;transform:scale(0.5);transform-origin:0 0"><span style="color:#45c060">数据有效</span></div>
<div class="t" style="left:183.50px;top:330.30px;width:79.60px;text-align:center;font-size:12.80px;color:#7d8087;transform:scale(0.5);transform-origin:0 0">--</div>
<div class="t" style="left:223.30px;top:330.30px;width:112.20px;text-align:center;font-size:12.80px;color:#7d8087;transform:scale(0.5);transform-origin:0 0">42</div>
<div class="t" style="left:279.40px;top:330.30px;width:110.00px;text-align:center;font-size:12.80px;color:#7d8087;transform:scale(0.5);transform-origin:0 0">6.398</div>
<div class="t" style="left:334.40px;top:330.30px;width:113.20px;text-align:center;font-size:12.80px;color:#7d8087;transform:scale(0.5);transform-origin:0 0">2.926</div>
<div class="t" style="left:391.00px;top:330.30px;width:124.00px;text-align:center;font-size:12.80px;color:#7d8087;transform:scale(0.5);transform-origin:0 0">120.1</div>
<div class="t" style="left:453.00px;top:330.30px;width:120.60px;text-align:center;font-size:12.80px;color:#7d8087;transform:scale(0.5);transform-origin:0 0">120.1</div>
<div class="t" style="left:513.30px;top:330.30px;width:122.20px;text-align:center;font-size:12.80px;color:#7d8087;transform:scale(0.5);transform-origin:0 0">120.1</div>
<div class="t" style="left:574.40px;top:330.30px;width:121.20px;text-align:center;font-size:12.80px;color:#7d8087;transform:scale(0.5);transform-origin:0 0">--</div>
<div class="t" style="left:55.80px;top:348.30px;width:81.20px;text-align:center;font-size:12.80px;color:#7d8087;transform:scale(0.5);transform-origin:0 0">甲烷</div>
<div class="t" style="left:96.40px;top:348.30px;width:93.80px;text-align:center;font-size:12.80px;color:#7d8087;transform:scale(0.5);transform-origin:0 0">0</div>
<div class="t" style="left:143.30px;top:348.30px;width:80.40px;text-align:center;font-size:12.80px;color:#7d8087;transform:scale(0.5);transform-origin:0 0"><span style="color:#ff5050">日常维护</span></div>
<div class="t" style="left:183.50px;top:348.30px;width:79.60px;text-align:center;font-size:12.80px;color:#7d8087;transform:scale(0.5);transform-origin:0 0">--</div>
<div class="t" style="left:223.30px;top:348.30px;width:112.20px;text-align:center;font-size:12.80px;color:#7d8087;transform:scale(0.5);transform-origin:0 0">0</div>
<div class="t" style="left:279.40px;top:348.30px;width:110.00px;text-align:center;font-size:12.80px;color:#7d8087;transform:scale(0.5);transform-origin:0 0">0.000</div>
<div class="t" style="left:334.40px;top:348.30px;width:113.20px;text-align:center;font-size:12.80px;color:#7d8087;transform:scale(0.5);transform-origin:0 0">0.000</div>
<div class="t" style="left:391.00px;top:348.30px;width:124.00px;text-align:center;font-size:12.80px;color:#7d8087;transform:scale(0.5);transform-origin:0 0">120.1</div>
<div class="t" style="left:453.00px;top:348.30px;width:120.60px;text-align:center;font-size:12.80px;color:#7d8087;transform:scale(0.5);transform-origin:0 0">120.1</div>
<div class="t" style="left:513.30px;top:348.30px;width:122.20px;text-align:center;font-size:12.80px;color:#7d8087;transform:scale(0.5);transform-origin:0 0">120.1</div>
<div class="t" style="left:574.40px;top:348.30px;width:121.20px;text-align:center;font-size:12.80px;color:#7d8087;transform:scale(0.5);transform-origin:0 0">--</div>
<div class="t" style="left:635.00px;top:338.30px;width:142.00px;text-align:center;font-size:13.00px;color:#3a8cff;font-weight:bold;-webkit-text-stroke:0.1px currentColor;transform:scale(0.5);transform-origin:0 0">查看谱图</div>
<div class="abs" style="left:222.90px;top:0.00px;width:0.80px;height:349.90px;background:#60646c"></div>
<div class="abs" style="left:634.60px;top:0.00px;width:0.80px;height:349.90px;background:#60646c"></div>
<div class="abs" style="left:1003.80px;top:37.90px;width:2.30px;height:174.70px;background:#a4a8b0;border-radius:1.2px"></div>
<div class="abs" style="left:1004.00px;top:33.80px;width:1.80px;height:1.60px;background:#a0a4ac;border-radius:1px"></div>
<div class="abs" style="left:1004.00px;top:345.40px;width:1.80px;height:1.60px;background:#80848c;border-radius:1px"></div></div>
<div class="abs" style="left:22.00px;top:83.90px;width:1008.00px;height:349.90px;border:0.8px solid #eff0f4"></div>
<div class="t" style="left:386.00px;top:442.70px;font-size:13.40px;color:#74777d;transform:scale(0.5);transform-origin:0 0">共 133 条</div>
<div class="abs" style="left:421.70px;top:439.10px;width:50.60px;height:13.90px;border:0.8px solid #e8eaee;border-radius:2px;background:#fff"></div>
<div class="t" style="left:431.40px;top:442.70px;font-size:13.40px;color:#74777d;transform:scale(0.5);transform-origin:0 0">30条/页</div>
<div class="t" style="left:465.00px;top:442.00px;font-size:12.00px;color:#c0c4cc;transform:scale(0.5);transform-origin:0 0">⌄</div>
<div class="t" style="left:485.00px;top:442.00px;font-size:16.00px;color:#c0c4cc;transform:scale(0.5);transform-origin:0 0">‹</div>
<div class="t" style="left:505.00px;top:442.70px;font-size:13.40px;font-weight:bold;color:#4a80d8;-webkit-text-stroke:0.15px currentColor;transform:scale(0.5);transform-origin:0 0">1</div>
<div class="t" style="left:522.80px;top:442.70px;font-size:13.40px;font-weight:bold;color:#303133;-webkit-text-stroke:0.15px currentColor;transform:scale(0.5);transform-origin:0 0">2</div>
<div class="t" style="left:540.80px;top:442.70px;font-size:13.40px;font-weight:bold;color:#303133;-webkit-text-stroke:0.15px currentColor;transform:scale(0.5);transform-origin:0 0">3</div>
<div class="t" style="left:558.90px;top:442.70px;font-size:13.40px;font-weight:bold;color:#303133;-webkit-text-stroke:0.15px currentColor;transform:scale(0.5);transform-origin:0 0">4</div>
<div class="t" style="left:577.00px;top:442.70px;font-size:13.40px;font-weight:bold;color:#303133;-webkit-text-stroke:0.15px currentColor;transform:scale(0.5);transform-origin:0 0">5</div>
<div class="t" style="left:596.50px;top:442.00px;font-size:16.00px;color:#303133;transform:scale(0.5);transform-origin:0 0">›</div>
<div class="t" style="left:619.00px;top:442.70px;font-size:13.40px;color:#74777d;transform:scale(0.5);transform-origin:0 0">前往</div>
<div class="abs" style="left:633.00px;top:439.10px;width:23.70px;height:13.90px;border:0.8px solid #e8eaee;border-radius:2px;background:#fff"></div>
<div class="t" style="left:643.80px;top:442.70px;font-size:13.40px;color:#74777d;transform:scale(0.5);transform-origin:0 0">1</div>
<div class="t" style="left:662.00px;top:442.70px;font-size:13.40px;color:#74777d;transform:scale(0.5);transform-origin:0 0">页</div>
</div>
<div id="mask" class="abs"></div>
<div class="abs" style="left:27.5px;top:44.5px;width:2px;height:472.5px;background:linear-gradient(90deg,rgba(0,0,20,0.14),rgba(0,0,20,0))"></div>
<div class="abs" style="left:28px;top:44.5px;width:1052px;height:1.5px;background:linear-gradient(180deg,rgba(0,0,20,0.12),rgba(0,0,20,0))"></div>
<div id="over" class="abs">
<div class="abs" style="left:881.60px;top:3.80px;width:68.40px;height:14.80px;background:#1f5cb8;border-radius:8px"></div>
<div class="abs" style="left:889.50px;top:8.00px;width:7.00px;height:6.00px;border:0.9px solid #dfe6f3;border-radius:1px"></div>
<div class="t" style="left:900.00px;top:7.00px;font-size:14.60px;color:#dfe6f3;-webkit-text-stroke:0.1px currentColor;transform:scale(0.5);transform-origin:0 0">未销数据监测</div>
<div class="abs" style="left:134.30px;top:35.30px;width:52.70px;height:15.70px;background:#1f5cb8"></div>
<div class="t" style="left:134.30px;top:39.50px;width:105.40px;text-align:center;font-size:12.00px;color:#d0dcf2;-webkit-text-stroke:0.1px currentColor;transform:scale(0.5);transform-origin:0 0">常规监测因子</div>
<div class="abs" style="left:403.00px;top:35.30px;width:40.30px;height:15.70px;background:#1f5cb8"></div>
<div class="t" style="left:403.00px;top:39.50px;width:80.60px;text-align:center;font-size:12.00px;color:#d0dcf2;-webkit-text-stroke:0.1px currentColor;transform:scale(0.5);transform-origin:0 0">原始监测</div>
<div class="abs" style="left:611.80px;top:35.90px;width:14.50px;height:15.00px;background:#1f5cb8;border-radius:2px"></div>
<div class="abs" style="left:616.80px;top:40.70px;width:4.60px;height:4.60px;border:0.9px solid #d0dcf0;border-radius:50%"></div>
<div class="abs" style="left:620.60px;top:44.70px;width:1.80px;height:0.90px;background:#d0dcf0;transform:rotate(45deg)"></div>
</div>
<div id="modal" class="abs">
<div class="abs" style="left:0.00px;top:0.00px;width:762.30px;height:18.20px;background:#f7f7f7;border-bottom:0.8px solid #ebebeb"></div>
<div class="t" style="left:10.30px;top:5.10px;font-size:15.20px;font-weight:bold;color:#303133;-webkit-text-stroke:0;transform:scale(0.5);transform-origin:0 0">VOCs<span style="font-weight:bold">谱图</span></div>
<div class="t" style="left:748.50px;top:3.80px;font-size:20.00px;color:#909399;transform:scale(0.5);transform-origin:0 0">×</div>
<div class="t" style="left:10.90px;top:29.60px;font-size:12.40px;color:#606266;transform:scale(0.5);transform-origin:0 0">监控点：</div>
<div class="t" style="left:36.80px;top:29.60px;font-size:12.40px;color:#13b27a;transform:scale(0.5);transform-origin:0 0">[气]</div>
<div class="t" style="left:49.40px;top:29.60px;font-size:12.40px;color:#606266;transform:scale(0.5);transform-origin:0 0">排放口（远大）</div>
<div class="t" style="left:121.40px;top:29.60px;font-size:12.40px;color:#606266;transform:scale(0.5);transform-origin:0 0">测量开始时间：</div>
<div class="t" style="left:169.00px;top:29.60px;font-size:13.10px;color:#303133;transform:scale(0.5);transform-origin:0 0">2025-12-24 18:27:11</div>
<div class="t" style="left:256.00px;top:29.60px;font-size:12.40px;color:#606266;transform:scale(0.5);transform-origin:0 0">测量周期：</div>
<div class="t" style="left:290.30px;top:29.60px;font-size:12.40px;color:#303133;transform:scale(0.5);transform-origin:0 0">1分钟</div>
<div class="abs" style="left:0.00px;top:46.40px;width:762.30px;height:0.80px;background:#f0f0f0"></div>
<svg class="abs" style="left:0;top:0" width="762" height="350" viewBox="173 93.2 762 350">
<rect x="350.7" y="169.3" width="27.6" height="241.2" fill="#e8eefc"/>
<line x1="203.40" y1="169.3" x2="203.40" y2="410.5" stroke="#eeeeee" stroke-width="0.8"/>
<line x1="285.18" y1="169.3" x2="285.18" y2="410.5" stroke="#eeeeee" stroke-width="0.8"/>
<line x1="366.96" y1="169.3" x2="366.96" y2="410.5" stroke="#eeeeee" stroke-width="0.8"/>
<line x1="448.74" y1="169.3" x2="448.74" y2="410.5" stroke="#eeeeee" stroke-width="0.8"/>
<line x1="530.52" y1="169.3" x2="530.52" y2="410.5" stroke="#eeeeee" stroke-width="0.8"/>
<line x1="612.30" y1="169.3" x2="612.30" y2="410.5" stroke="#eeeeee" stroke-width="0.8"/>
<line x1="203.4" y1="410.90" x2="612.3" y2="410.90" stroke="#eeeeee" stroke-width="0.8"/>
<line x1="203.4" y1="350.60" x2="612.3" y2="350.60" stroke="#eeeeee" stroke-width="0.8"/>
<line x1="203.4" y1="290.30" x2="612.3" y2="290.30" stroke="#eeeeee" stroke-width="0.8"/>
<line x1="203.4" y1="230.00" x2="612.3" y2="230.00" stroke="#eeeeee" stroke-width="0.8"/>
<line x1="203.4" y1="169.70" x2="612.3" y2="169.70" stroke="#eeeeee" stroke-width="0.8"/>
<g font-family="Liberation Sans" font-size="6.6" fill="#7c7f85" text-anchor="end">
<text x="199.4" y="353.00">10</text>
<text x="199.4" y="292.70">20</text>
<text x="199.4" y="232.40">30</text>
<text x="199.4" y="172.10">40</text>
</g>
<g font-family="Liberation Sans" font-size="6.6" fill="#7c7f85" text-anchor="middle">
<text x="203.40" y="419.5">0</text>
<text x="285.18" y="419.5">20</text>
<text x="366.96" y="419.5">40</text>
<text x="448.74" y="419.5">60</text>
<text x="530.52" y="419.5">80</text>
<text x="612.30" y="419.5">100</text>
</g>
<text x="198.5" y="160" font-family="Liberation Sans" font-size="6.6" fill="#7c7f85">mV</text>
<text x="594.5" y="429.8" font-family="Liberation Sans" font-size="6.3" fill="#505358" stroke="#505358" stroke-width="0.15">时间(s)</text>
<path d="M203.6,187.5 L215,187.4 L224,187.7 L250,187.4 L280,187.0 L284,186.3 L330,186.0 L369.9,185.8 L370.5,188.0 C370.8,180 371.1,172.8 371.6,172.8 C372.3,172.8 373,182 374.2,188.5 C375.2,192.5 377.2,196.7 381.3,196.7 C385,196.7 389,192 393.3,189 C397,186.8 402,186.2 410,186.0 L431.3,185.6 C433,185.6 433.8,189 434.6,196 C435.2,204 435.6,214.1 436.1,214.1 C436.8,214.1 437.4,205 438.2,196 C438.9,189 439.5,185.6 441,185.6 L470,185.9 L500,186.6 L538.1,187.2 C541.5,187.3 545.5,192.9 548.9,192.9 C552,192.9 555,187.5 558.8,185.6 C562,184.8 567,184.6 575,184.5 L602.7,184.3" fill="none" stroke="#4587d2" stroke-width="1.4" stroke-linejoin="round" stroke-linecap="round"/>
</svg>
<div class="abs" style="left:453.70px;top:68.30px;width:292.50px;height:14.50px;background:#f2f3f7;border-bottom:0.8px solid #ebeef5"></div>
<div class="t" style="left:453.70px;top:70.60px;width:372.60px;text-align:center;font-size:13.20px;color:#6a6d73;transform:scale(0.5);transform-origin:0 0">监测项目</div>
<div class="t" style="left:640.00px;top:70.60px;width:212.40px;text-align:center;font-size:13.20px;color:#6a6d73;transform:scale(0.5);transform-origin:0 0">总烃</div>
<div class="abs" style="left:453.70px;top:82.80px;width:292.50px;height:18.37px;background:#fff;border-bottom:0.8px solid #ebeef5"></div>
<div class="t" style="left:459.50px;top:88.60px;font-size:12.80px;color:#5f6268;transform:scale(0.5);transform-origin:0 0">谱峰开始时间(s)</div>
<div class="t" style="left:640.00px;top:89.00px;width:212.40px;text-align:center;font-size:12.60px;color:#74777d;transform:scale(0.5);transform-origin:0 0">36.0</div>
<div class="abs" style="left:453.70px;top:101.17px;width:292.50px;height:18.37px;background:#f5f6f9;border-bottom:0.8px solid #ebeef5"></div>
<div class="t" style="left:459.50px;top:106.97px;font-size:12.80px;color:#5f6268;transform:scale(0.5);transform-origin:0 0">谱峰结束时间(s)</div>
<div class="t" style="left:640.00px;top:107.37px;width:212.40px;text-align:center;font-size:12.60px;color:#74777d;transform:scale(0.5);transform-origin:0 0">43.0</div>
<div class="abs" style="left:453.70px;top:119.54px;width:292.50px;height:18.37px;background:#fff;border-bottom:0.8px solid #ebeef5"></div>
<div class="t" style="left:459.50px;top:125.34px;font-size:12.80px;color:#5f6268;transform:scale(0.5);transform-origin:0 0">测量浓度值(毫克/立方米)</div>
<div class="abs" style="left:453.70px;top:137.91px;width:292.50px;height:18.37px;background:#f5f6f9;border-bottom:0.8px solid #ebeef5"></div>
<div class="t" style="left:459.50px;top:143.71px;font-size:12.80px;color:#5f6268;transform:scale(0.5);transform-origin:0 0">测量保留时间(s)</div>
<div class="abs" style="left:453.70px;top:156.28px;width:292.50px;height:18.37px;background:#fff;border-bottom:0.8px solid #ebeef5"></div>
<div class="t" style="left:459.50px;top:162.08px;font-size:12.80px;color:#5f6268;transform:scale(0.5);transform-origin:0 0">测量峰面积</div>
<div class="abs" style="left:453.70px;top:174.65px;width:292.50px;height:18.37px;background:#f5f6f9;border-bottom:0.8px solid #ebeef5"></div>
<div class="t" style="left:459.50px;top:180.45px;font-size:12.80px;color:#5f6268;transform:scale(0.5);transform-origin:0 0">测量峰高度(mV)</div>
</div>
<div class="abs" style="left:19px;top:249.7px;width:13px;height:17.5px;background:#fff;border-radius:2px 0 0 2px"></div>
<svg class="abs" style="left:22.5px;top:255.5px" width="7" height="5.5" viewBox="0 0 7 5.5"><path d="M0.6,0.6 L2.8,2.75 L0.6,4.9 M3.4,0.6 L5.6,2.75 L3.4,4.9" fill="none" stroke="#5a74c8" stroke-width="1"/></svg>
<svg class="abs" style="left:1070px;top:505px" width="10" height="12" viewBox="0 0 10 12"><path d="M10,6.5 L10,12 L5.5,12 Q9,10 10,6.5 Z" fill="#f4f5f7"/></svg>
</div>
</body></html>
